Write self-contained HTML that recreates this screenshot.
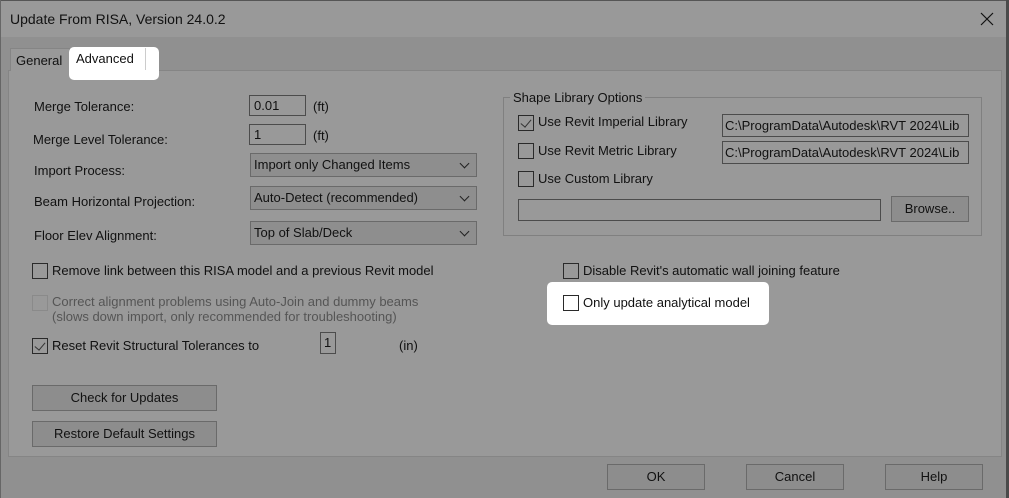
<!DOCTYPE html>
<html><head><style>
*{box-sizing:border-box;margin:0;padding:0}
body{width:1009px;height:498px;background:#909090;font-family:"Liberation Sans",sans-serif;font-size:13px;color:#111;position:relative;overflow:hidden}
.a{position:absolute;white-space:nowrap}
.title{left:0;top:0;width:1009px;height:37px;background:#999;border-top:1px solid #555}
.frameR{right:0;top:0;width:3px;height:498px;background:#4a4a4a}
.frameL{left:0;top:0;width:1px;height:498px;background:#666}
.panel{left:8px;top:70px;width:994px;height:387px;background:#999;border:1px solid #858585}
.inp{background:#999;border:1px solid #4c4c4c;padding:1px 4px;height:21px;line-height:17px}
.sel{background:#8e8e8e;border:1px solid #6a6a6a;height:24px;line-height:21px;padding-left:3px}
.sel::after{content:"";position:absolute;right:8px;top:6px;width:6px;height:6px;border-right:1px solid #222;border-bottom:1px solid #222;transform:rotate(45deg)}
.cb{width:16px;height:16px;border:1px solid #2a2a2a;background:#999}
.btn{background:#8d8d8d;border:1px solid #6a6a6a;text-align:center;line-height:24px}
.chk::after{content:"";position:absolute;left:4px;top:1px;width:5px;height:9px;border-right:1px solid #333;border-bottom:1px solid #333;transform:rotate(40deg)}
</style></head><body>
<div class="a title"></div>
<div class="a frameR"></div><div class="a frameL"></div>
<div class="a" style="left:10px;top:11px;font-size:14px">Update From RISA, Version 24.0.2</div>
<svg class="a" style="left:980px;top:12px" width="14" height="14"><path d="M1 1L13 13M13 1L1 13" stroke="#111" stroke-width="1.2"/></svg>

<div class="a panel"></div>
<div class="a" style="left:10px;top:48px;width:60px;height:23px;background:#999;border:1px solid #858585;border-bottom:none"></div>
<div class="a" style="left:16px;top:53px">General</div>
<div class="a" style="left:69px;top:47px;width:90px;height:33px;background:#fff;border-radius:5px"></div>
<div class="a" style="left:145px;top:48px;width:1px;height:22px;background:#ccc"></div>
<div class="a" style="left:76px;top:51px">Advanced</div>

<div class="a" style="left:34px;top:99px">Merge Tolerance:</div>
<div class="a inp" style="left:249px;top:95px;width:57px">0.01</div>
<div class="a" style="left:313px;top:99px">(ft)</div>
<div class="a" style="left:33px;top:132px">Merge Level Tolerance:</div>
<div class="a inp" style="left:249px;top:124px;width:57px">1</div>
<div class="a" style="left:313px;top:128px">(ft)</div>
<div class="a" style="left:34px;top:163px">Import Process:</div>
<div class="a sel" style="left:250px;top:153px;width:227px">Import only Changed Items</div>
<div class="a" style="left:34px;top:194px">Beam Horizontal Projection:</div>
<div class="a sel" style="left:250px;top:186px;width:227px">Auto-Detect (recommended)</div>
<div class="a" style="left:34px;top:228px">Floor Elev Alignment:</div>
<div class="a sel" style="left:250px;top:221px;width:227px">Top of Slab/Deck</div>

<div class="a cb" style="left:32px;top:263px"></div>
<div class="a" style="left:52px;top:263px">Remove link between this RISA model and a previous Revit model</div>
<div class="a cb" style="left:32px;top:295px;border-color:#8a8a8a"></div>
<div class="a" style="left:52px;top:294px;color:#555;line-height:15px">Correct alignment problems using Auto-Join and dummy beams<br>(slows down import, only recommended for troubleshooting)</div>
<div class="a cb chk" style="left:32px;top:338px"></div>
<div class="a" style="left:52px;top:338px">Reset Revit Structural Tolerances to</div>
<div class="a inp" style="left:320px;top:332px;width:16px;height:22px;padding:1px 3px">1</div>
<div class="a" style="left:399px;top:338px">(in)</div>

<div class="a btn" style="left:32px;top:385px;width:185px;height:26px">Check for Updates</div>
<div class="a btn" style="left:32px;top:421px;width:185px;height:26px">Restore Default Settings</div>

<div class="a" style="left:503px;top:97px;width:479px;height:139px;border:1px solid #808080"></div>
<div class="a" style="left:510px;top:90px;background:#999;padding:0 3px">Shape Library Options</div>
<div class="a cb chk" style="left:518px;top:115px"></div>
<div class="a" style="left:538px;top:114px">Use Revit Imperial Library</div>
<div class="a inp" style="left:722px;top:114px;width:247px;height:23px;line-height:19px;overflow:hidden;padding-left:2px">C:\ProgramData\Autodesk\RVT 2024\Lib</div>
<div class="a cb" style="left:518px;top:143px"></div>
<div class="a" style="left:538px;top:143px">Use Revit Metric Library</div>
<div class="a inp" style="left:722px;top:141px;width:247px;height:23px;line-height:19px;overflow:hidden;padding-left:2px">C:\ProgramData\Autodesk\RVT 2024\Lib</div>
<div class="a cb" style="left:518px;top:171px"></div>
<div class="a" style="left:538px;top:171px">Use Custom Library</div>
<div class="a inp" style="left:518px;top:199px;width:363px;height:22px"></div>
<div class="a btn" style="left:891px;top:196px;width:78px;height:26px">Browse..</div>

<div class="a cb" style="left:563px;top:263px"></div>
<div class="a" style="left:583px;top:263px">Disable Revit's automatic wall joining feature</div>
<div class="a" style="left:547px;top:282px;width:222px;height:43px;background:#fff;border-radius:5px"></div>
<div class="a cb" style="left:563px;top:295px;background:#fff"></div>
<div class="a" style="left:583px;top:295px">Only update analytical model</div>

<div class="a btn" style="left:607px;top:464px;width:98px;height:26px">OK</div>
<div class="a btn" style="left:746px;top:464px;width:98px;height:26px">Cancel</div>
<div class="a btn" style="left:885px;top:464px;width:98px;height:26px">Help</div>
</body></html>
